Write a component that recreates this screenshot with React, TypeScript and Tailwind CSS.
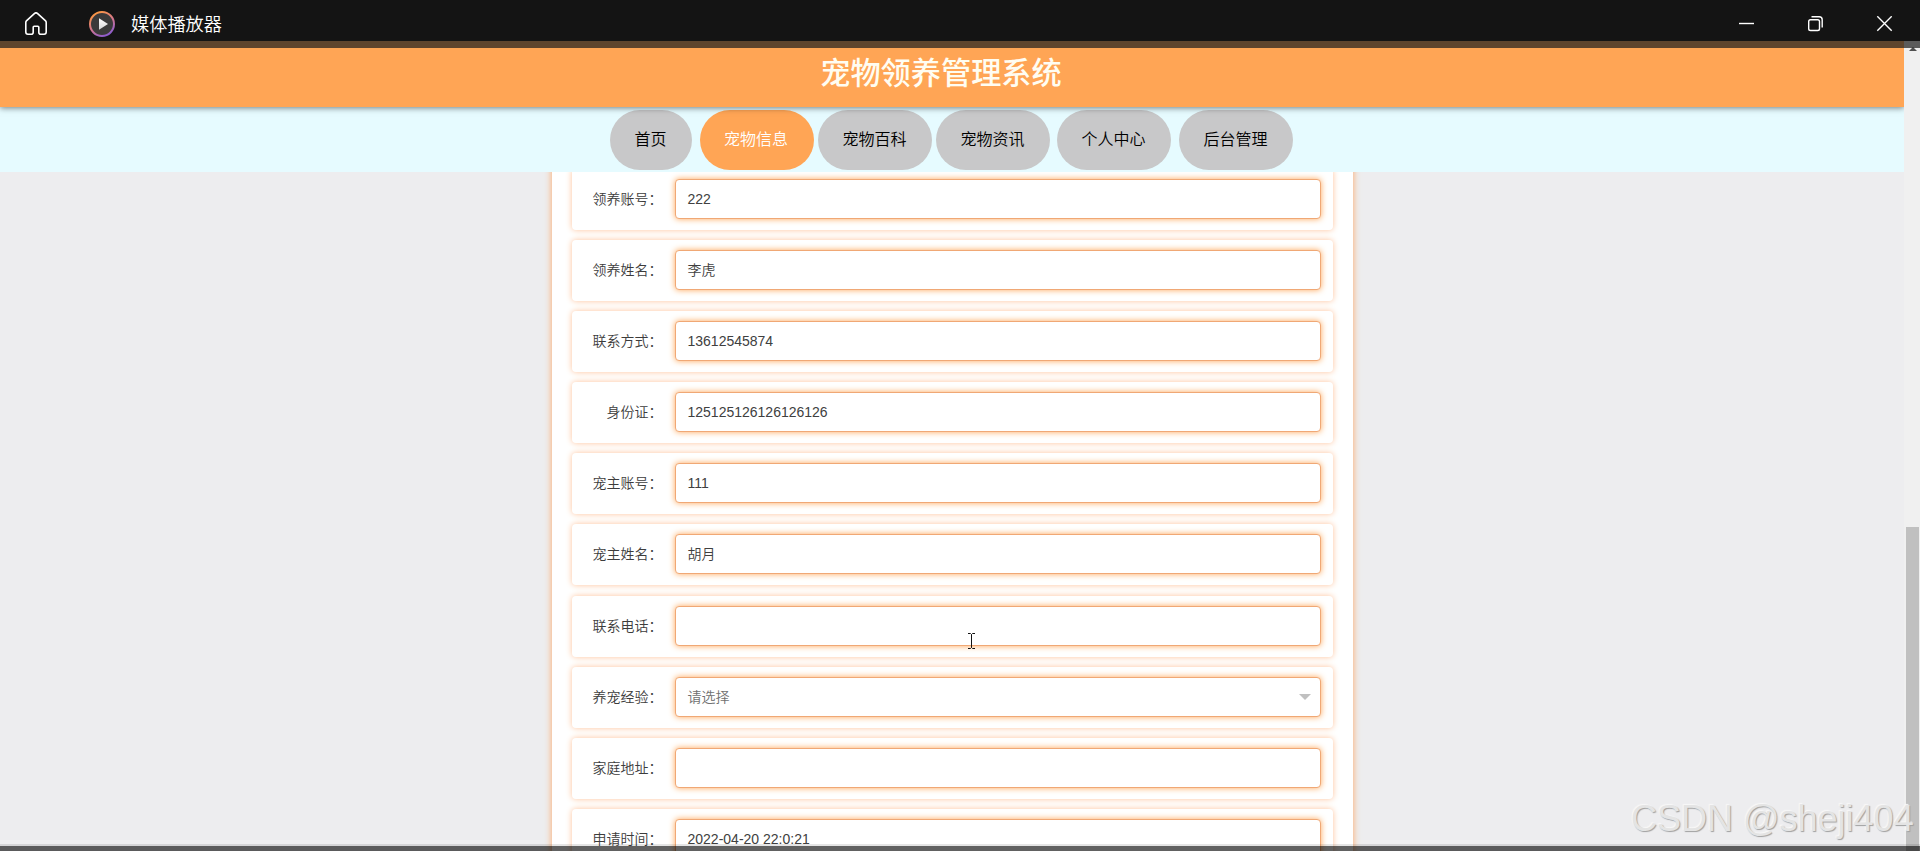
const sans = "font-['Liberation_Sans','Noto_Sans_CJK_SC',sans-serif]";

type Field = { label: string; value: string; kind?: 'select' };

const fields: Field[] = [
  { label: '领养账号：', value: '222' },
  { label: '领养姓名：', value: '李虎' },
  { label: '联系方式：', value: '13612545874' },
  { label: '身份证：', value: '125125126126126126' },
  { label: '宠主账号：', value: '111' },
  { label: '宠主姓名：', value: '胡月' },
  { label: '联系电话：', value: '' },
  { label: '养宠经验：', value: '请选择', kind: 'select' },
  { label: '家庭地址：', value: '' },
  { label: '申请时间：', value: '2022-04-20 22:0:21' },
];

const tabs = [
  { label: '首页', style: 'w-[82px] mr-[8px] bg-[#c8c8c9] text-black' },
  { label: '宠物信息', style: 'w-[114px] mr-[4px] pr-px bg-[#ffa555] text-white' },
  { label: '宠物百科', style: 'w-[114px] mr-[4px] bg-[#c8c8c9] text-black' },
  { label: '宠物资讯', style: 'w-[114px] mr-[7px] bg-[#c8c8c9] text-black' },
  { label: '个人中心', style: 'w-[114px] mr-[8px] bg-[#c8c8c9] text-black' },
  { label: '后台管理', style: 'w-[114px] bg-[#c8c8c9] text-black' },
];

function TitleBar() {
  return (
    <div className="flex h-[41px] shrink-0 items-center bg-[#141414] text-white">
      <svg className="ml-[24px] mt-[6px]" width="24" height="24" viewBox="0 0 24 24" fill="none" stroke="white" strokeWidth="1.6" strokeLinejoin="round">
        <path d="M10.6 1.4 2.4 8.9Q1.8 9.5 1.8 10.4V20.1Q1.8 22.2 3.9 22.2H7.2Q9.2 22.2 9.2 20.2V15.2Q9.2 14.2 10.2 14.2H13.8Q14.8 14.2 14.8 15.2V20.2Q14.8 22.2 16.8 22.2H20.1Q22.2 22.2 22.2 20.1V10.4Q22.2 9.5 21.6 8.9L13.4 1.4Q12 .2 10.6 1.4Z" />
      </svg>
      <svg className="ml-[41px] mt-[7px]" width="26" height="26" viewBox="0 0 26 26">
        <defs>
          <linearGradient id="ring" x1="0.2" y1="0" x2="0.7" y2="1">
            <stop offset="0" stopColor="#ff9a3c" />
            <stop offset="0.5" stopColor="#d6788a" />
            <stop offset="1" stopColor="#8a5bd0" />
          </linearGradient>
          <linearGradient id="tri" x1="0" y1="0" x2="0" y2="1">
            <stop offset="0" stopColor="#fff" />
            <stop offset="1" stopColor="#d4d4d4" />
          </linearGradient>
        </defs>
        <circle cx="13" cy="13" r="12" fill="#3a3a3a" stroke="url(#ring)" strokeWidth="2" />
        <path d="M10 7.2 19 13 10 18.8Z" fill="url(#tri)" />
      </svg>
      <span className="ml-[16px] mt-[9px] text-[18.2px] font-[350] leading-[24px]">媒体播放器</span>
      <svg className="ml-auto mr-[27px] mt-[7px]" width="154" height="16" viewBox="0 0 154 16" fill="none" stroke="white" strokeWidth="1.4">
        <path d="M0 7.5H15" />
        <rect x="69.7" y="3.7" width="10.8" height="10.8" rx="1.8" />
        <path d="M72.5 .8H80.2Q83.2 .8 83.2 3.8V11.5" />
        <path d="M138.3 .3 152.7 14.7M152.7 .3 138.3 14.7" />
      </svg>
    </div>
  );
}

function FieldRow({ label, value, kind }: Field) {
  return (
    <div className="mb-[10.1px] flex h-[61px] shrink-0 items-start rounded-[4px] bg-white pt-[10px] pr-[12px] shadow-[0_0_6px_#ffc299]">
      <span className="w-[91px] text-right text-[14px] font-[350] leading-[40px] text-[#3c3c3c]">{label}</span>
      <div className="ml-[12px] flex h-[40px] flex-1 items-center justify-between rounded-[4px] border border-[#f0a875] bg-white pl-[12px] pr-[9px] shadow-[0_0_6px_#ffa555]">
        <span className={kind === 'select' ? 'pt-px text-[14px] font-[350] text-[#707070]' : 'pt-px text-[14px] font-[350] text-[#404040]'}>{value}</span>
        {kind === 'select' && (
          <svg width="12" height="6" viewBox="0 0 12 6">
            <path d="M0 0H12L6 6Z" fill="#c0c0c0" />
          </svg>
        )}
      </div>
    </div>
  );
}

export default function App() {
  return (
    <div className={`relative flex h-[851px] w-[1920px] flex-col overflow-hidden bg-[#ededef] ${sans}`}>
      <TitleBar />
      <div className="flex min-h-0 flex-1">
        <main className="flex min-w-0 flex-1 flex-col overflow-hidden">
          <header className="relative z-10 flex h-[66px] shrink-0 justify-center bg-[#ffa555] shadow-[0_1px_6px_rgba(0,0,0,0.5)]">
            <h1 className="mr-[22px] mt-[10px] text-[30.2px] font-medium leading-[46px] text-[#fffdf2]">宠物领养管理系统</h1>
          </header>
          <nav className="flex h-[65px] shrink-0 bg-[#e6fbff] pl-[609.5px] pt-[3px]">
            {tabs.map((t) => (
              <div key={t.label} className={`flex h-[60px] shrink-0 items-center justify-center rounded-[30px] text-[16px] font-[350] ${t.style}`}>
                {t.label}
              </div>
            ))}
          </nav>
          <section className="min-h-0 flex-1 overflow-hidden pl-[551.5px]">
            <div className="-mt-[20px] flex h-[760px] w-[801px] flex-col bg-white px-[20px] pt-[17px] shadow-[0_0_7px_#ffa562]">
              {fields.map((f) => (
                <FieldRow key={f.label} {...f} />
              ))}
            </div>
          </section>
        </main>
        <aside className="flex w-[16px] shrink-0 flex-col bg-[#f0f0f0]">
          <svg className="ml-[5px] mt-[6px]" width="8" height="4" viewBox="0 0 8 4">
            <path d="M4 0 8 4H0Z" fill="#505050" />
          </svg>
          <div className="ml-[2px] mt-[476px] w-[13px] flex-1 bg-[#c0c0c0]" />
        </aside>
      </div>
      <div className="absolute left-0 top-[41px] z-20 h-[7px] w-full bg-[#1e1e1e]/71" />
      <div className="absolute bottom-[5px] left-0 z-20 h-[2px] w-full bg-black/10" />
      <div className="absolute bottom-0 left-0 z-20 h-[5px] w-full bg-black/62" />
      <svg className="absolute left-[967px] top-[633px]" width="9" height="16" viewBox="0 0 9 16" fill="none" stroke="#111" strokeWidth="1">
        <path d="M1 .5H3.5L4.5 1.5 5.5 .5H8M4.5 1.5V14.5M1 15.5H3.5L4.5 14.5 5.5 15.5H8" />
      </svg>
      <div className="absolute left-[1631px] top-[797px] z-20 whitespace-nowrap text-[36px] leading-[44px] text-[#e4e4e4] [text-shadow:1px_1px_1px_#a0a0a0,-1px_-1px_1px_#f8f8f8]">
        CSDN @sheji404
      </div>
    </div>
  );
}
